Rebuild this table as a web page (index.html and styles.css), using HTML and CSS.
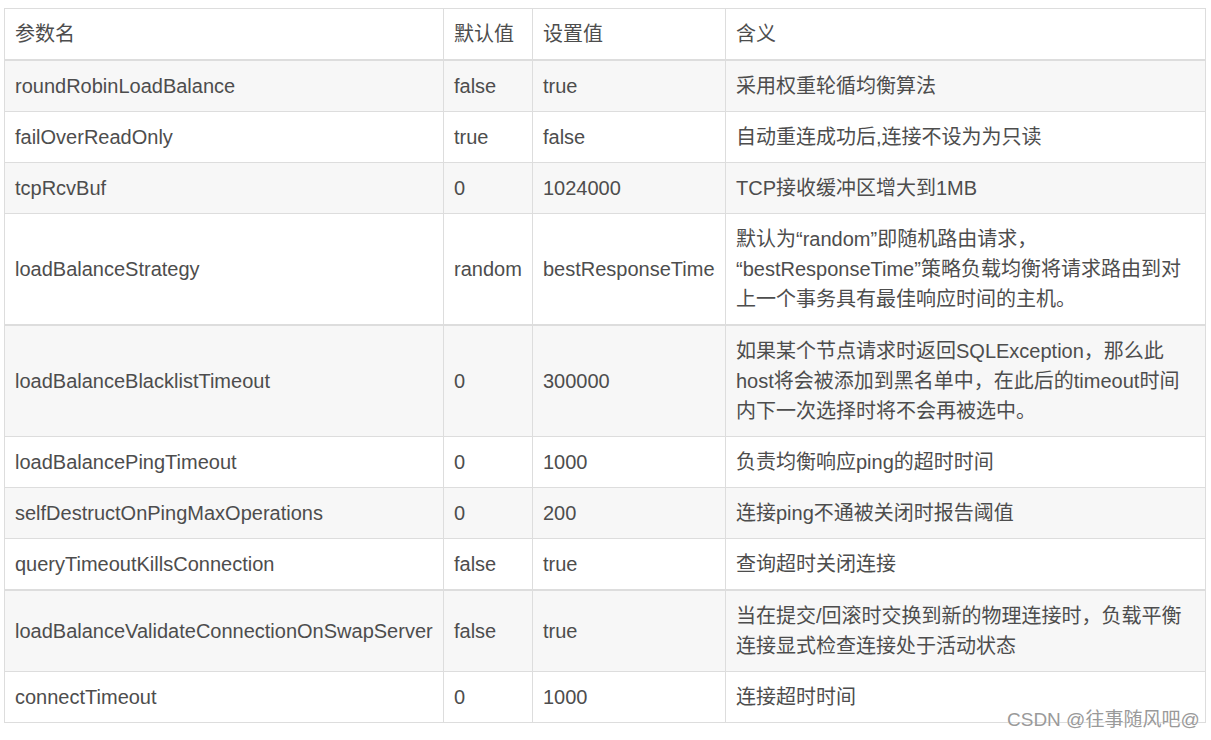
FILE: index.html
```html
<!DOCTYPE html>
<html lang="zh-CN">
<head>
<meta charset="utf-8">
<title>参数表</title>
<link rel="stylesheet" href="styles.css">
</head>
<body>
<table class="params">
  <colgroup>
    <col class="c1"><col class="c2"><col class="c3"><col class="c4">
  </colgroup>
  <thead>
    <tr><th>参数名</th><th>默认值</th><th>设置值</th><th>含义</th></tr>
  </thead>
  <tbody>
    <tr class="odd"><td>roundRobinLoadBalance</td><td>false</td><td>true</td><td>采用权重轮循均衡算法</td></tr>
    <tr><td>failOverReadOnly</td><td>true</td><td>false</td><td>自动重连成功后,连接不设为为只读</td></tr>
    <tr class="odd"><td>tcpRcvBuf</td><td>0</td><td>1024000</td><td>TCP接收缓冲区增大到1MB</td></tr>
    <tr class="thick"><td>loadBalanceStrategy</td><td>random</td><td>bestResponseTime</td><td>默认为“random”即随机路由请求，“bestResponseTime”策略负载均衡将请求路由到对上一个事务具有最佳响应时间的主机。</td></tr>
    <tr class="odd"><td>loadBalanceBlacklistTimeout</td><td>0</td><td>300000</td><td>如果某个节点请求时返回SQLException，那么此host将会被添加到黑名单中，在此后的timeout时间内下一次选择时将不会再被选中。</td></tr>
    <tr><td>loadBalancePingTimeout</td><td>0</td><td>1000</td><td>负责均衡响应ping的超时时间</td></tr>
    <tr class="odd"><td>selfDestructOnPingMaxOperations</td><td>0</td><td>200</td><td>连接ping不通被关闭时报告阈值</td></tr>
    <tr class="thick"><td>queryTimeoutKillsConnection</td><td>false</td><td>true</td><td>查询超时关闭连接</td></tr>
    <tr class="odd"><td>loadBalanceValidateConnectionOnSwapServer</td><td>false</td><td>true</td><td>当在提交/回滚时交换到新的物理连接时，负载平衡连接显式检查连接处于活动状态</td></tr>
    <tr><td>connectTimeout</td><td>0</td><td>1000</td><td>连接超时时间</td></tr>
  </tbody>
</table>
<div class="watermark">CSDN @往事随风吧@</div>
</body>
</html>
```

FILE: styles.css
```css
html, body {
  margin: 0;
  padding: 0;
  background: #ffffff;
}
body {
  font-family: "Liberation Sans", Arial, "Noto Sans CJK SC", sans-serif;
  color: #4d4d4d;
  position: relative;
  width: 1211px;
  height: 740px;
  overflow: hidden;
}
.params {
  border-collapse: collapse;
  table-layout: fixed;
  width: 1201px;
  margin: 8px 0 0 4px;
  font-size: 20px;
  line-height: 30px;
}
.c1 { width: 439px; }
.c2 { width: 89px; }
.c3 { width: 193px; }
.c4 { width: 480px; }
.params th,
.params td {
  border: 1px solid #dddddd;
  padding: 10px 10px;
  text-align: left;
  vertical-align: middle;
  font-weight: normal;
  word-break: normal;
}
.params thead th {
  border-bottom: 2px solid #dddddd;
}
.params td:first-child,
.params td:nth-child(2),
.params td:nth-child(3) {
  white-space: nowrap;
}
.params tr.odd td {
  background: #f7f7f7;
}
.params tr.thick td {
  border-bottom: 2px solid #dddddd;
}
.watermark {
  position: absolute;
  left: 1007px;
  top: 706px;
  font-size: 19px;
  line-height: 28px;
  color: #9a9a9a;
  white-space: nowrap;
  text-shadow: 0 0 1px #ffffff;
}
```
